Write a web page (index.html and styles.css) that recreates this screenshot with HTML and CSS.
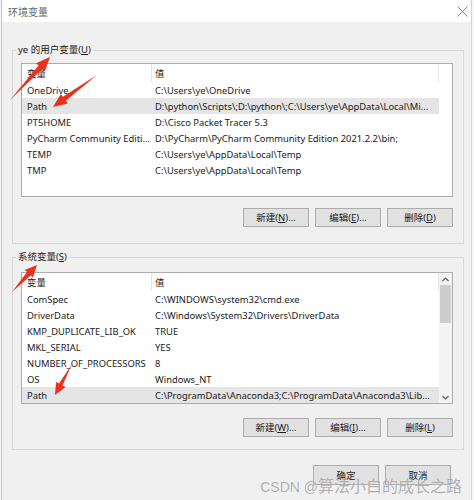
FILE: index.html
```html
<!DOCTYPE html>
<html lang="zh">
<head>
<meta charset="utf-8">
<title>环境变量</title>
<link rel="stylesheet" href="styles.css">
</head>
<body>
<div class="window">
  <div class="titlebar">
    <span class="title">环境变量</span>
    <svg class="close" width="11" height="11" viewBox="0 0 11 11"><path d="M0.5 0.5 L10.5 10.5 M10.5 0.5 L0.5 10.5" stroke="#8a8a8a" stroke-width="1" fill="none"/></svg>
  </div>
  <div class="content">
    <fieldset class="group g-user">
      <legend>ye 的用户变量(<u>U</u>)</legend>
      <div class="inner">
        <div class="list l-user">
          <div class="cols">
            <div class="head"><div class="c1">变量</div><div class="c2">值</div></div>
            <div class="row"><div class="c1">OneDrive</div><div class="c2">C:\Users\ye\OneDrive</div></div>
            <div class="row sel"><div class="c1">Path</div><div class="c2">D:\python\Scripts\;D:\python\;C:\Users\ye\AppData\Local\Mi...</div></div>
            <div class="row"><div class="c1">PT5HOME</div><div class="c2">D:\Cisco Packet Tracer 5.3</div></div>
            <div class="row"><div class="c1">PyCharm Community Editi...</div><div class="c2">D:\PyCharm\PyCharm Community Edition 2021.2.2\bin;</div></div>
            <div class="row"><div class="c1">TEMP</div><div class="c2">C:\Users\ye\AppData\Local\Temp</div></div>
            <div class="row"><div class="c1">TMP</div><div class="c2">C:\Users\ye\AppData\Local\Temp</div></div>
          </div>
          <div class="spacer"></div>
        </div>
        <div class="btns">
          <button class="btn">新建(<u>N</u>)...</button>
          <button class="btn">编辑(<u>E</u>)...</button>
          <button class="btn">删除(<u>D</u>)</button>
        </div>
      </div>
    </fieldset>

    <fieldset class="group g-sys">
      <legend>系统变量(<u>S</u>)</legend>
      <div class="inner">
        <div class="list l-sys">
          <div class="cols">
            <div class="head"><div class="c1">变量</div><div class="c2">值</div></div>
            <div class="row"><div class="c1">ComSpec</div><div class="c2">C:\WINDOWS\system32\cmd.exe</div></div>
            <div class="row"><div class="c1">DriverData</div><div class="c2">C:\Windows\System32\Drivers\DriverData</div></div>
            <div class="row"><div class="c1">KMP_DUPLICATE_LIB_OK</div><div class="c2">TRUE</div></div>
            <div class="row"><div class="c1">MKL_SERIAL</div><div class="c2">YES</div></div>
            <div class="row"><div class="c1">NUMBER_OF_PROCESSORS</div><div class="c2">8</div></div>
            <div class="row"><div class="c1">OS</div><div class="c2">Windows_NT</div></div>
            <div class="row sel"><div class="c1">Path</div><div class="c2">C:\ProgramData\Anaconda3;C:\ProgramData\Anaconda3\Lib...</div></div>
          </div>
          <div class="vscroll">
            <div class="sb-btn"><svg width="7" height="5" viewBox="0 0 7 5"><path d="M0.5 4 L3.5 1 L6.5 4" stroke="#606060" fill="none" stroke-width="1.2"/></svg></div>
            <div class="sb-track"><div class="sb-thumb"></div></div>
            <div class="sb-btn"><svg width="7" height="5" viewBox="0 0 7 5"><path d="M0.5 1 L3.5 4 L6.5 1" stroke="#606060" fill="none" stroke-width="1.2"/></svg></div>
          </div>
        </div>
        <div class="btns">
          <button class="btn">新建(<u>W</u>)...</button>
          <button class="btn">编辑(<u>I</u>)...</button>
          <button class="btn">删除(<u>L</u>)</button>
        </div>
      </div>
    </fieldset>

    <div class="footer">
      <button class="btn btn-ok">确定</button>
      <button class="btn">取消</button>
    </div>
  </div>
</div>

<div class="watermark"><span class="wm-latin">CSDN @</span>算法小白的成长之路</div>

<svg class="arrows" width="474" height="500" viewBox="0 0 474 500">
  <polygon fill="#e8321e" points="10,100 42.3,69 44.9,71.3 50,57 36.1,63.2 38.6,65.6"/>
  <polygon fill="#e8321e" points="97,75 65.8,100.8 67.9,103.6 53,107 60.8,93.9 62.9,96.8"/>
  <polygon fill="#e8321e" points="12,292 30.7,275.5 32.9,277.5 37,265 24.8,270.1 27,272.1"/>
  <polygon fill="#e8321e" points="72,364 62.5,385.4 65.6,387.1 55,395 56,381.8 59,383.5"/>
</svg>
</body>
</html>
```

FILE: styles.css
```css
* { box-sizing: border-box; }

html, body {
  margin: 0;
  padding: 0;
}

body {
  position: relative;
  width: 474px;
  height: 500px;
  overflow: hidden;
  background: #f7f7f7;
  font-family: "Noto Sans", "Noto Sans CJK SC", sans-serif;
  font-size: 9.4px;
  color: #1a1a1a;
}

.window {
  margin-left: 1px;
  width: 471px;
  height: 500px;
  border-left: 1px solid #c2c2c2;
  border-right: 1px solid #d4d4d4;
  background: #f0f0f0;
}

.titlebar {
  height: 22px;
  background: #ffffff;
  display: flex;
  align-items: center;
  padding-left: 6px;
  padding-right: 3px;
}

.title {
  font-family: "Noto Sans CJK SC", sans-serif;
  font-size: 10px;
  color: #6a6a6a;
}

.close {
  margin-left: auto;
}

.content {
  padding-left: 10px;
}

.group {
  margin: 0;
  padding: 0;
  width: 452px;
  border: 1px solid #d9d9d9;
  min-inline-size: 0;
}

.group legend {
  margin-left: 3px;
  padding: 0 2px;
  line-height: 16px;
  font-size: 9.5px;
  font-family: "Noto Sans", "Noto Sans CJK SC", sans-serif;
  color: #1a1a1a;
}

.g-user { margin-top: 20px; }
.g-sys { margin-top: 5px; }

.g-user .inner { padding: 5px 8px 16px 8px; }
.g-sys .inner { padding: 7px 8px 12px 8px; }

.list {
  display: flex;
  width: 432px;
  background: #ffffff;
  border: 1px solid #acacac;
}

.l-user { height: 134px; }
.l-sys { height: 132px; }

.cols {
  width: 417px;
  display: flex;
  flex-direction: column;
}

.spacer { flex: 1; }

.head, .row {
  display: flex;
  white-space: nowrap;
}

.head {
  height: 18px;
  align-items: center;
}

.row {
  height: 16px;
  align-items: center;
}

.row.sel { background: #e5e5e5; }

.c1 {
  width: 129px;
  padding-left: 5px;
  overflow: hidden;
}

.c2 {
  flex: 1;
  padding-left: 4px;
  overflow: hidden;
}

.head .c1, .head .c2 {
  height: 18px;
  line-height: 18px;
  font-family: "Noto Sans CJK SC", sans-serif;
}

.head .c2 {
  border-left: 1px solid #e5e5e5;
  border-right: 1px solid #e5e5e5;
  padding-left: 3px;
}

.vscroll {
  flex: 1;
  display: flex;
  flex-direction: column;
  background: #f3f3f3;
}

.sb-btn {
  height: 12px;
  display: flex;
  align-items: center;
  justify-content: center;
}

.sb-track {
  flex: 1;
  padding: 0 1px;
}

.sb-thumb {
  height: 38px;
  background: #cdcdcd;
}

.btns {
  display: flex;
  justify-content: flex-end;
  gap: 6px;
  width: 432px;
}

.g-user .btns { margin-top: 11px; }
.g-sys .btns { margin-top: 14px; }

.btn {
  width: 66px;
  height: 19px;
  margin: 0;
  padding: 0;
  background: #e1e1e1;
  border: 1px solid #adadad;
  font-family: "Noto Sans", "Noto Sans CJK SC", sans-serif;
  font-size: 9.5px;
  color: #1a1a1a;
  line-height: 17px;
}

.footer {
  display: flex;
  justify-content: flex-end;
  gap: 6px;
  padding-right: 20px;
  margin-top: 15px;
}

.footer .btn { height: 20px; }

.watermark {
  position: absolute;
  right: 12px;
  top: 474px;
  font-family: "Noto Sans CJK SC", sans-serif;
  font-size: 16px;
  line-height: 22px;
  color: rgba(150, 150, 150, 0.75);
  text-shadow: 0 0 1px rgba(255, 255, 255, 0.6);
  white-space: nowrap;
}

.wm-latin {
  font-family: "Liberation Sans", sans-serif;
  font-size: 14px;
}

.arrows {
  position: absolute;
  left: 0;
  top: 0;
  pointer-events: none;
}
```
